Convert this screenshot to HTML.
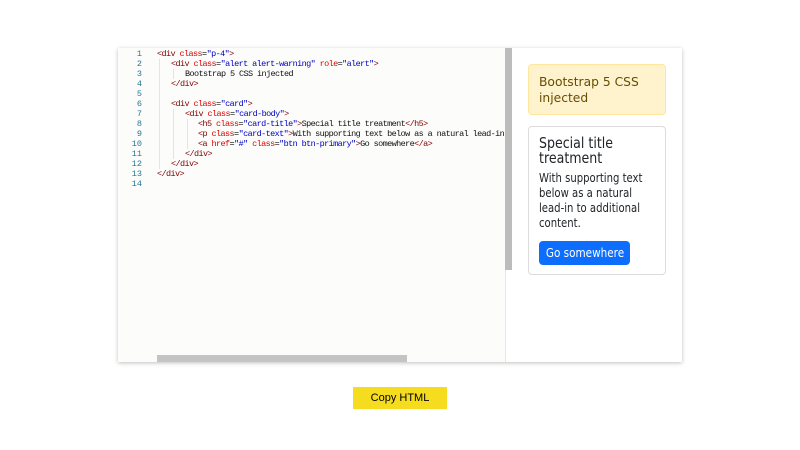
<!DOCTYPE html>
<html><head><style>
body{margin:0;width:800px;height:450px;background:#fff;position:relative;font-family:"DejaVu Sans",sans-serif;overflow:hidden}
.box{position:absolute;left:118px;top:48px;width:564px;height:314px;background:#fff;box-shadow:0 1px 4px rgba(0,0,0,.25)}
.ed{position:absolute;left:0;top:0;width:387px;height:314px;background:#fcfcfb;border-right:1px solid #e6e6e6;overflow:hidden}
.ln{position:absolute;left:0;width:24px;text-align:right;font:8.5px "Liberation Mono",monospace;color:#237893}
.cd{position:absolute;left:39px;font:8.5px "Liberation Mono",monospace;letter-spacing:-0.6px;white-space:pre;color:#111}
.t{color:#800000}.a{color:#e00000}.v{color:#0000c0}
.vs{position:absolute;left:387px;top:0;width:7px;height:222px;background:#bcbcbc}
.hs{position:absolute;left:39px;top:307px;width:250px;height:7px;background:#c4c4c4}
.guide{position:absolute;width:1px;background:#e4e4e4}
.alert{position:absolute;left:410px;top:16px;width:138px;height:51px;background:#fff3cd;border:1px solid #ffe69c;border-radius:4px;color:#664d03;font-size:12.3px;line-height:16px;padding:9px 0 0 10px;box-sizing:border-box}
.card{position:absolute;left:410px;top:78px;width:138px;height:149px;border:1px solid #dcdcdc;border-radius:4px;box-sizing:border-box;padding:9px 0 0 10px;color:#212529;white-space:nowrap}
.sx{display:block;transform:scaleX(.84);transform-origin:0 0}
h5{margin:0;font-weight:normal;font-size:15px;line-height:15px}
p{margin:5px 0 0;font-size:12px;line-height:15px}
.btn{position:absolute;left:10px;top:114px;width:91px;height:24px;background:#0d6efd;color:#fff;border-radius:4px;font-size:12px;line-height:24px;text-align:center;white-space:nowrap}
.btn span{display:inline-block;transform:scaleX(.87)}
.copy{position:absolute;left:353px;top:387px;width:94px;height:22px;background:#f5dc1e;font:11px "Liberation Sans",sans-serif;line-height:22px;text-align:center;color:#000}
</style></head><body>
<div class="box">
<div class="ed">
<div class="guide" style="left:41px;top:11px;height:110px"></div>
<div class="guide" style="left:55px;top:21px;height:10px"></div>
<div class="guide" style="left:55px;top:61px;height:50px"></div>
<div class="guide" style="left:69px;top:71px;height:30px"></div>
<div class="ln" style="top:1px">1</div><div class="ln" style="top:11px">2</div><div class="ln" style="top:21px">3</div><div class="ln" style="top:31px">4</div><div class="ln" style="top:41px">5</div><div class="ln" style="top:51px">6</div><div class="ln" style="top:61px">7</div><div class="ln" style="top:71px">8</div><div class="ln" style="top:81px">9</div><div class="ln" style="top:91px">10</div><div class="ln" style="top:101px">11</div><div class="ln" style="top:111px">12</div><div class="ln" style="top:121px">13</div><div class="ln" style="top:131px">14</div>
<div class="cd" style="top:1px"><span class="t">&lt;div</span> <span class="a">class</span>=<span class="v">"p-4"</span><span class="t">&gt;</span></div>
<div class="cd" style="top:11px;left:53px"><span class="t">&lt;div</span> <span class="a">class</span>=<span class="v">"alert alert-warning"</span> <span class="a">role</span>=<span class="v">"alert"</span><span class="t">&gt;</span></div>
<div class="cd" style="top:21px;left:67px">Bootstrap 5 CSS injected</div>
<div class="cd" style="top:31px;left:53px"><span class="t">&lt;/div&gt;</span></div>
<div class="cd" style="top:51px;left:53px"><span class="t">&lt;div</span> <span class="a">class</span>=<span class="v">"card"</span><span class="t">&gt;</span></div>
<div class="cd" style="top:61px;left:67px"><span class="t">&lt;div</span> <span class="a">class</span>=<span class="v">"card-body"</span><span class="t">&gt;</span></div>
<div class="cd" style="top:71px;left:80px"><span class="t">&lt;h5</span> <span class="a">class</span>=<span class="v">"card-title"</span><span class="t">&gt;</span>Special title treatment<span class="t">&lt;/h5&gt;</span></div>
<div class="cd" style="top:81px;left:80px"><span class="t">&lt;p</span> <span class="a">class</span>=<span class="v">"card-text"</span><span class="t">&gt;</span>With supporting text below as a natural lead-in to additional</div>
<div class="cd" style="top:91px;left:80px"><span class="t">&lt;a</span> <span class="a">href</span>=<span class="v">"#"</span> <span class="a">class</span>=<span class="v">"btn btn-primary"</span><span class="t">&gt;</span>Go somewhere<span class="t">&lt;/a&gt;</span></div>
<div class="cd" style="top:101px;left:67px"><span class="t">&lt;/div&gt;</span></div>
<div class="cd" style="top:111px;left:53px"><span class="t">&lt;/div&gt;</span></div>
<div class="cd" style="top:121px"><span class="t">&lt;/div&gt;</span></div>
<div class="hs"></div>
</div>
<div class="vs"></div>
<div class="alert">Bootstrap 5 CSS<br>injected</div>
<div class="card"><h5 class="sx">Special title<br>treatment</h5><p class="sx">With supporting text<br>below as a natural<br>lead-in to additional<br>content.</p><div class="btn"><span>Go somewhere</span></div></div>
</div>
<div class="copy">Copy HTML</div>
</body></html>
